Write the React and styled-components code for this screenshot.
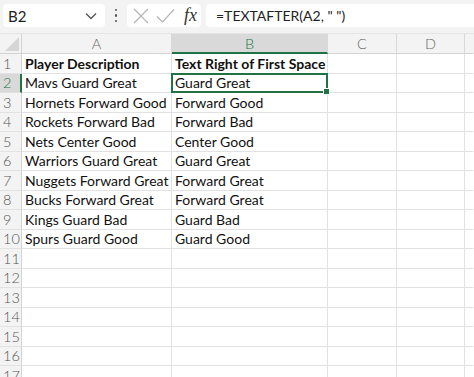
import React from 'react';
import styled, { createGlobalStyle } from 'styled-components';

const Global = createGlobalStyle`
  html, body { margin: 0; padding: 0; background: #ffffff; }
  body { font-family: Lato, "Open Sans", sans-serif; overflow: hidden; }
`;

const rows = [
  ['Player Description', 'Text Right of First Space'],
  ['Mavs Guard Great', 'Guard Great'],
  ['Hornets Forward Good', 'Forward Good'],
  ['Rockets Forward Bad', 'Forward Bad'],
  ['Nets Center Good', 'Center Good'],
  ['Warriors Guard Great', 'Guard Great'],
  ['Nuggets Forward Great', 'Forward Great'],
  ['Bucks Forward Great', 'Forward Great'],
  ['Kings Guard Bad', 'Guard Bad'],
  ['Spurs Guard Good', 'Guard Good'],
];

const cols = ['A', 'B', 'C', 'D'];

const App = () => {
  const all = [];
  for (let i = 0; i < 17; i++) all.push(rows[i] || ['', '']);

  return (
    <>
      <Global />
      <Page>
        <Toolbar>
          <NameBox>
            <span>B2</span>
            <svg width="12" height="8" viewBox="0 0 12 8">
              <path d="M1 1.5 L6 6.5 L11 1.5" fill="none" stroke="#555" strokeWidth="1.3" />
            </svg>
          </NameBox>
          <Dots>
            <i /><i /><i />
          </Dots>
          <IconBox>
            <svg width="18" height="18" viewBox="0 0 18 18">
              <path d="M2 2 L16 16 M16 2 L2 16" stroke="#b4b4b4" strokeWidth="1.2" fill="none" />
            </svg>
            <svg width="19" height="18" viewBox="0 0 19 18">
              <path d="M1 9.5 L6.5 15 L18 2.5" stroke="#b4b4b4" strokeWidth="1.2" fill="none" />
            </svg>
            <Fx>fx</Fx>
          </IconBox>
          <FormulaBox>=TEXTAFTER(A2, " ")</FormulaBox>
        </Toolbar>

        <Grid>
          <Corner>
            <svg width="14" height="14" viewBox="0 0 14 14">
              <path d="M14 0 L14 14 L0 14 Z" fill="#d6d6d6" />
            </svg>
          </Corner>
          {cols.map((c) => (
            <ColHead key={c} $active={c === 'B'}>{c}</ColHead>
          ))}
          <ColHead $blank />

          {all.map((r, i) => (
            <React.Fragment key={i}>
              <RowHead $active={i === 1}>{i + 1}</RowHead>
              <Cell $bold={i === 0}>{r[0]}</Cell>
              <Cell $bold={i === 0} $selected={i === 1}>{r[1]}</Cell>
              <Cell />
              <Cell />
              <Cell $last />
            </React.Fragment>
          ))}
        </Grid>
      </Page>
    </>
  );
};

const Page = styled.div`
  width: 474px;
  height: 377px;
  overflow: hidden;
  background: #ffffff;
`;

const Toolbar = styled.div`
  height: 34px;
  background: #f3f3f3;
  display: flex;
  align-items: center;
  padding: 0 0 2px 3px;
  box-sizing: border-box;
  border-bottom: 1px solid #e4e4e4;
`;

const Box = styled.div`
  height: 23px;
  background: #ffffff;
  border-radius: 4px;
  display: flex;
  align-items: center;
  box-sizing: border-box;
`;

const NameBox = styled(Box)`
  width: 102px;
  padding: 0 8px 0 5px;
  justify-content: space-between;
  font-size: 15px;
  color: #222;
`;

const Dots = styled.div`
  width: 22px;
  display: flex;
  flex-direction: column;
  align-items: center;
  gap: 3px;
  i {
    width: 2.5px;
    height: 2.5px;
    border-radius: 50%;
    background: #555;
  }
`;

const IconBox = styled(Box)`
  width: 74px;
  padding: 0 4px 0 5px;
  gap: 6px;
`;

const Fx = styled.span`
  font-family: "Liberation Serif", serif;
  font-style: italic;
  font-size: 18px;
  color: #333;
  margin-left: 3px;
`;

const FormulaBox = styled(Box)`
  flex: 1;
  margin-left: 5px;
  padding-left: 10px;
  border-radius: 4px 0 0 4px;
  font-size: 14px;
  color: #222;
`;

const Grid = styled.div`
  display: grid;
  grid-template-columns: 22px 150px 156px 69px 68px 1fr;
  grid-auto-rows: 19.5px;
  grid-template-rows: 20px;
`;

const Corner = styled.div`
  background: #f3f3f3;
  border-right: 1px solid #d4d4d4;
  border-bottom: 1px solid #d4d4d4;
  display: flex;
  align-items: flex-end;
  justify-content: flex-end;
  padding: 0 2px 2px 0;
  box-sizing: border-box;
`;

const ColHead = styled.div`
  background: ${(p) => (p.$active ? '#d9d9d9' : '#f3f3f3')};
  border-right: 1px solid ${(p) => (p.$blank ? 'transparent' : '#d8d8d8')};
  border-bottom: ${(p) => (p.$active ? '2px solid #217346' : '1px solid #d4d4d4')};
  color: ${(p) => (p.$active ? '#217346' : '#666')};
  font-size: 14.5px;
  font-weight: 300;
  display: flex;
  align-items: center;
  justify-content: center;
  box-sizing: border-box;
`;

const RowHead = styled.div`
  background: ${(p) => (p.$active ? '#d9d9d9' : '#f3f3f3')};
  border-right: ${(p) => (p.$active ? '2px solid #217346' : '1px solid #d4d4d4')};
  border-bottom: 1px solid #e2e2e2;
  color: ${(p) => (p.$active ? '#217346' : '#555')};
  font-size: 14.5px;
  font-weight: 300;
  display: flex;
  align-items: center;
  padding-left: 3px;
  box-sizing: border-box;
`;

const Cell = styled.div`
  position: relative;
  border-right: 1px solid ${(p) => (p.$last ? 'transparent' : '#e2e2e2')};
  border-bottom: 1px solid #e2e2e2;
  font-size: 14px;
  font-weight: ${(p) => (p.$bold ? 700 : 400)};
  color: #111;
  padding-left: 3px;
  display: flex;
  align-items: center;
  white-space: nowrap;
  overflow: visible;
  box-sizing: border-box;
  ${(p) =>
    p.$selected &&
    `
    &::after {
      content: '';
      position: absolute;
      left: -1px;
      top: -1px;
      right: -1px;
      bottom: -1px;
      border: 2px solid #217346;
    }
    &::before {
      content: '';
      position: absolute;
      right: -3px;
      bottom: -3px;
      width: 5px;
      height: 5px;
      background: #217346;
      border: 1px solid #fff;
      z-index: 2;
    }
  `}
`;

export default App;
